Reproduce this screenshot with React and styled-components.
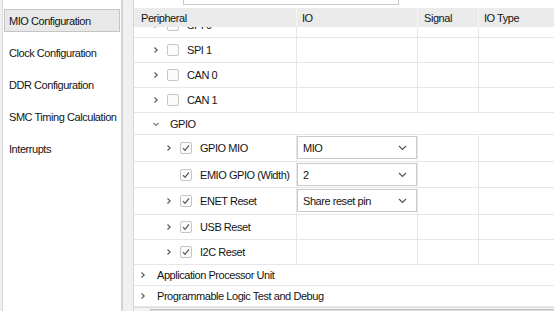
import styled, { createGlobalStyle } from "styled-components";

const GlobalStyle = createGlobalStyle`
  html, body {
    margin: 0;
    padding: 0;
  }
  body {
    font-family: "Liberation Sans", Arial, sans-serif;
    font-size: 11px;
    letter-spacing: -0.45px;
    color: #141414;
    background: #f0f0f0;
  }
`;

const COLS = "162px 121px 61px 1fr";

const Shell = styled.div`
  display: flex;
  gap: 10px;
  width: 554px;
  height: 311px;
  padding-left: 2px;
  box-sizing: border-box;
  overflow: hidden;
  background: #f0f0f0;
`;

const Sidebar = styled.nav`
  width: 121px;
  flex-shrink: 0;
  box-sizing: border-box;
  background: #fff;
  border-left: 1px solid #dadada;
  border-right: 2px solid #d3d3d3;
  padding: 9px 1px 0;
  display: flex;
  flex-direction: column;
  gap: 9px;
`;

const SideItem = styled.div`
  height: 23px;
  box-sizing: border-box;
  display: flex;
  align-items: center;
  padding: 0 4px;
  white-space: nowrap;
  border: 1px solid ${(p) => (p.$active ? "#c4c4c4" : "transparent")};
  background: ${(p) => (p.$active ? "#e8e8e8" : "transparent")};
`;

const Main = styled.section`
  flex: 1;
  min-width: 0;
  background: #fff;
  border-left: 1px solid #d6d6d6;
  display: flex;
  flex-direction: column;
  overflow: hidden;
`;

const TopBar = styled.div`
  height: 8px;
  flex-shrink: 0;
  box-sizing: border-box;
  padding: 0 0 3px 49px;
  display: flex;
  align-items: flex-end;
  overflow: hidden;
`;

const SearchBox = styled.div`
  width: 216px;
  height: 20px;
  flex-shrink: 0;
  box-sizing: border-box;
  border: 1px solid #c9c9c9;
  background: #fff;
`;

const Header = styled.div`
  display: grid;
  grid-template-columns: ${COLS};
  height: 19px;
  flex-shrink: 0;
  background: #ebebeb;
`;

const HeadCell = styled.div`
  display: flex;
  align-items: center;
  padding-left: ${(p) => p.$pad || 5}px;
  border-left: 1px solid ${(p) => (p.$first ? "transparent" : "#f6f6f6")};
  white-space: nowrap;
`;

const Body = styled.div`
  height: 280px;
  flex-shrink: 0;
  overflow: hidden;
`;

const List = styled.div`
  margin-top: -14px;
`;

const Row = styled.div`
  display: grid;
  grid-template-columns: ${COLS};
  height: ${(p) => p.$h || 25}px;
  box-sizing: border-box;
  border-bottom: 1px solid #e6e6e6;
`;

const GroupRow = styled.div`
  display: flex;
  align-items: center;
  height: ${(p) => p.$h || 21}px;
  box-sizing: border-box;
  border-bottom: 1px solid #e6e6e6;
  padding-left: ${(p) => 3 + p.$level * 13}px;
  white-space: nowrap;
`;

const TreeCell = styled.div`
  display: flex;
  align-items: center;
  padding-left: ${(p) => 3 + p.$level * 13}px;
  white-space: nowrap;
  overflow: hidden;
`;

const Cell = styled.div`
  border-left: 1px solid #e6e6e6;
  display: flex;
  align-items: flex-start;
  padding-top: 1px;
  min-width: 0;
`;

const Toggle = styled.span`
  width: 12px;
  height: 12px;
  flex-shrink: 0;
  display: inline-flex;
  margin-right: ${(p) => p.$gap}px;
`;

const Box = styled.span`
  width: 12px;
  height: 12px;
  box-sizing: border-box;
  flex-shrink: 0;
  border: 1px solid #c6c6c6;
  border-radius: 2px;
  background: #fbfbfb;
  display: inline-flex;
  margin-right: 8px;
`;

const Select = styled.div`
  width: 100%;
  height: 23px;
  box-sizing: border-box;
  border: 1px solid #cacaca;
  background: #fff;
  display: flex;
  align-items: center;
  justify-content: space-between;
  padding: 0 9px 0 5px;
  white-space: nowrap;
`;

const HScroll = styled.div`
  height: 16px;
  flex-shrink: 0;
  box-sizing: border-box;
  border-top: 1px solid #dcdcdc;
  background: #f3f3f3;
  display: flex;
  padding-top: 1px;
`;

const ScrollArrow = styled.div`
  width: 16px;
  flex-shrink: 0;
`;

const Thumb = styled.div`
  flex: 1;
  border-top: 1px solid #c2c2c2;
  border-left: 1px solid #c2c2c2;
  background: #dadada;
`;

const Chevron = ({ open }) => (
  <svg width="12" height="12" viewBox="0 0 12 12">
    <path
      d={open ? "M3.5 5 L6 7.5 L8.5 5" : "M4.5 3.5 L7.2 6 L4.5 8.5"}
      fill="none"
      stroke={open ? "#777" : "#555"}
      strokeWidth="1.1"
    />
  </svg>
);

const Check = ({ checked }) => (
  <Box>
    {checked && (
      <svg width="10" height="10" viewBox="0 0 10 10">
        <polyline points="2,5.2 4,7.4 8,2.4" fill="none" stroke="#555" strokeWidth="1.2" />
      </svg>
    )}
  </Box>
);

const Dropdown = ({ value }) => (
  <Select>
    <span>{value}</span>
    <svg width="9" height="6" viewBox="0 0 9 6">
      <path d="M1 1 L4.5 4.5 L8 1" fill="none" stroke="#555" strokeWidth="1.2" />
    </svg>
  </Select>
);

const Item = ({ level, label, expand = true, checked, io, h }) => (
  <Row $h={h}>
    <TreeCell $level={level}>
      <Toggle $gap={5}>{expand && <Chevron />}</Toggle>
      <Check checked={checked} />
      <span>{label}</span>
    </TreeCell>
    <Cell>{io && <Dropdown value={io} />}</Cell>
    <Cell />
    <Cell />
  </Row>
);

const Group = ({ level, label, open, h }) => (
  <GroupRow $level={level} $h={h}>
    <Toggle $gap={8}>
      <Chevron open={open} />
    </Toggle>
    <span>{label}</span>
  </GroupRow>
);

const sideItems = [
  "MIO Configuration",
  "Clock Configuration",
  "DDR Configuration",
  "SMC Timing Calculation",
  "Interrupts",
];

export default function App() {
  return (
    <>
      <GlobalStyle />
      <Shell>
        <Sidebar>
          {sideItems.map((s, i) => (
            <SideItem key={s} $active={i === 0}>
              {s}
            </SideItem>
          ))}
        </Sidebar>
        <Main>
          <TopBar>
            <SearchBox />
          </TopBar>
          <Header>
            <HeadCell $first $pad={6}>Peripheral</HeadCell>
            <HeadCell>IO</HeadCell>
            <HeadCell $pad={6}>Signal</HeadCell>
            <HeadCell>IO Type</HeadCell>
          </Header>
          <Body>
            <List>
              <Item level={1} label="SPI 0" />
              <Item level={1} label="SPI 1" />
              <Item level={1} label="CAN 0" />
              <Item level={1} label="CAN 1" />
              <Group level={1} label="GPIO" open h={22} />
              <Item level={2} label="GPIO MIO" checked io="MIO" h={27} />
              <Item level={2} label="EMIO GPIO (Width)" checked expand={false} io="2" h={26} />
              <Item level={2} label="ENET Reset" checked io="Share reset pin" h={27} />
              <Item level={2} label="USB Reset" checked />
              <Item level={2} label="I2C Reset" checked />
              <Group level={0} label="Application Processor Unit" />
              <Group level={0} label="Programmable Logic Test and Debug" />
            </List>
          </Body>
          <HScroll>
            <ScrollArrow />
            <Thumb />
          </HScroll>
        </Main>
      </Shell>
    </>
  );
}
